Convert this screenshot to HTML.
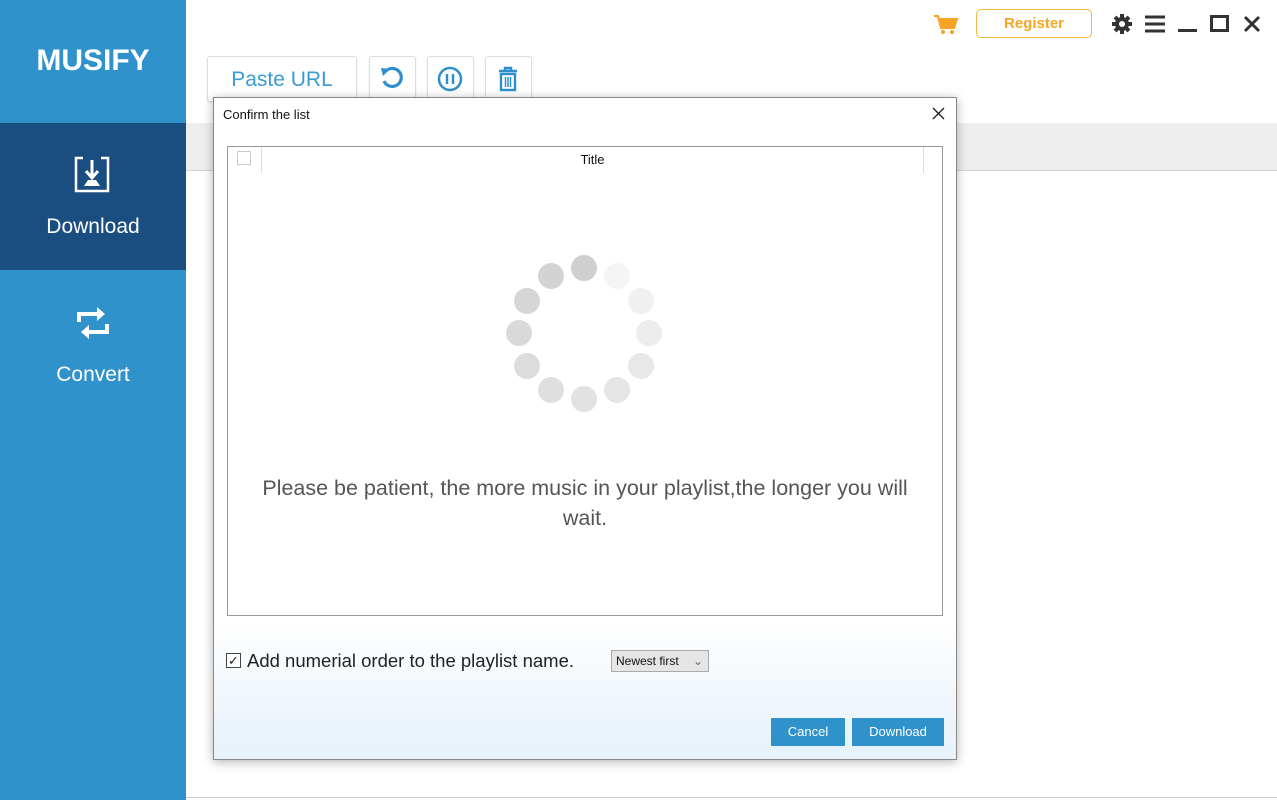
<!DOCTYPE html><html><head><style>
*{margin:0;padding:0;box-sizing:border-box}
body{width:1277px;height:800px;position:relative;overflow:hidden;background:#fff;font-family:"Liberation Sans","DejaVu Sans",sans-serif}
.a{position:absolute}
.side{left:0;top:0;width:186px;height:800px;background:#3092cb}
.btn{border:1px solid #ddd;border-radius:3px;background:#fff;box-shadow:0 1px 2px rgba(0,0,0,.08)}
</style></head><body>
<div class="a side"></div>
<div class="a" style="left:0;top:44px;width:186px;text-align:center;color:#fff;font-size:30px;font-weight:bold">MUSIFY</div>
<div class="a" style="left:0;top:123px;width:186px;height:147px;background:#1b4e80"></div>
<svg class="a" style="left:73px;top:156px" width="38" height="38" viewBox="0 0 38 38"><path d="M10 2H3v33h32V2h-7" fill="none" stroke="#fff" stroke-width="2.5"/><path d="M19 4v17M13 15l6 7 6-7" stroke="#fff" stroke-width="3" fill="none"/><path d="M11 30l4-6h8l4 6z" fill="#fff"/></svg>
<div class="a" style="left:0;top:215px;width:186px;text-align:center;color:#fff;font-size:21px">Download</div>
<svg class="a" style="left:75px;top:304px" width="36" height="38" viewBox="0 0 36 38"><path d="M4 18V10h22" fill="none" stroke="#fff" stroke-width="4"/><path d="M22 3l8 7-8 7z" fill="#fff"/><path d="M32 20v8H10" fill="none" stroke="#fff" stroke-width="4"/><path d="M14 21l-8 7 8 7z" fill="#fff"/></svg>
<div class="a" style="left:0;top:363px;width:186px;text-align:center;color:#fff;font-size:21px">Convert</div>

<div class="a" style="left:186px;top:123px;width:1091px;height:48px;background:#eeeeee;border-bottom:1px solid #d5d5d5"></div>
<div class="a" style="left:186px;top:797px;width:1091px;height:1px;background:#ccc"></div>

<div class="a btn" style="left:207px;top:56px;width:150px;height:46px;color:#3a9bd4;font-size:21px;text-align:center;line-height:46px">Paste URL</div>
<div class="a btn" style="left:369px;top:56px;width:47px;height:46px"></div>
<svg class="a" style="left:379px;top:65px" width="26" height="26" viewBox="0 0 26 26"><path d="M7 6a9 9 0 1 1-2 10" fill="none" stroke="#2f8fcc" stroke-width="3.2"/><path d="M2 3l9 1-7 7z" fill="#2f8fcc"/></svg>
<div class="a btn" style="left:427px;top:56px;width:47px;height:46px"></div>
<svg class="a" style="left:437px;top:66px" width="26" height="26" viewBox="0 0 26 26"><circle cx="13" cy="13" r="11" fill="none" stroke="#2f8fcc" stroke-width="2.5"/><path d="M10 8v10M16 8v10" stroke="#2f8fcc" stroke-width="2.5"/></svg>
<div class="a btn" style="left:485px;top:56px;width:47px;height:46px"></div>
<svg class="a" style="left:497px;top:66px" width="22" height="26" viewBox="0 0 22 26"><path d="M2 5h18M8 5V2h6v3" stroke="#2f8fcc" stroke-width="2.4" fill="none"/><rect x="4" y="8" width="14" height="16" fill="none" stroke="#2f8fcc" stroke-width="2.4"/><path d="M8.5 11v10M11 11v10M13.5 11v10" stroke="#2f8fcc" stroke-width="1.5"/></svg>

<svg class="a" style="left:933px;top:14px" width="26" height="22" viewBox="0 0 26 22"><path d="M1 2h4l3 12h13l3-9H7" fill="#f7a325" stroke="#f7a325" stroke-width="2"/><circle cx="10" cy="18" r="2" fill="#f7a325"/><circle cx="19" cy="18" r="2" fill="#f7a325"/></svg>
<div class="a" style="left:976px;top:9px;width:116px;height:29px;border:1.5px solid #f5b640;border-radius:5px;color:#f5a623;font-size:15px;font-weight:bold;text-align:center;line-height:27px">Register</div>
<svg class="a" style="left:1111px;top:13px" width="22" height="22" viewBox="0 0 22 22"><g stroke="#333" stroke-width="4"><path d="M11 1v20M1 11h20M4 4l14 14M18 4L4 18"/></g><circle cx="11" cy="11" r="7" fill="#333"/><circle cx="11" cy="11" r="3" fill="#fff"/></svg>
<svg class="a" style="left:1145px;top:15px" width="20" height="18"><path d="M0 2h20M0 9h20M0 16h20" stroke="#333" stroke-width="3"/></svg>
<div class="a" style="left:1178px;top:29px;width:19px;height:3px;background:#333"></div>
<div class="a" style="left:1210px;top:15px;width:19px;height:17px;border:3px solid #333"></div>
<svg class="a" style="left:1243px;top:15px" width="18" height="18"><path d="M2 2l14 14M16 2L2 16" stroke="#333" stroke-width="3"/></svg>

<!-- dialog -->
<div class="a" style="left:213px;top:97px;width:744px;height:663px;border:1px solid #888;background:linear-gradient(#fff 0,#fff 520px,#e6f1fa 663px);box-shadow:0 2px 10px rgba(0,0,0,.3)"></div>
<div class="a" style="left:223px;top:107px;font-size:13px;color:#111">Confirm the list</div>
<svg class="a" style="left:932px;top:107px" width="13" height="13"><path d="M1 1l11 11M12 1L1 12" stroke="#222" stroke-width="1.4"/></svg>
<div class="a" style="left:227px;top:146px;width:716px;height:470px;border:1px solid #999;background:#fff"></div>
<div class="a" style="left:237px;top:151px;width:14px;height:14px;border:1px solid #ccc"></div>
<div class="a" style="left:261px;top:147px;width:1px;height:26px;background:#ddd"></div>
<div class="a" style="left:923px;top:147px;width:1px;height:26px;background:#ddd"></div>
<div class="a" style="left:262px;top:152px;width:661px;text-align:center;font-size:13px;color:#111">Title</div>
<svg class="a" style="left:500px;top:250px" width="170" height="170" viewBox="500 250 170 170">
<circle cx="584" cy="268" r="13" fill="#cfcfcf"/><circle cx="551" cy="276" r="13" fill="#d3d3d3"/><circle cx="527" cy="301" r="13" fill="#d6d6d6"/><circle cx="519" cy="333" r="13" fill="#d9d9d9"/><circle cx="527" cy="366" r="13" fill="#dcdcdc"/><circle cx="551" cy="390" r="13" fill="#dfdfdf"/><circle cx="584" cy="399" r="13" fill="#e2e2e2"/><circle cx="617" cy="390" r="13" fill="#e5e5e5"/><circle cx="641" cy="366" r="13" fill="#e8e8e8"/><circle cx="649" cy="333" r="13" fill="#ececec"/><circle cx="641" cy="301" r="13" fill="#f0f0f0"/><circle cx="617" cy="276" r="13" fill="#f5f5f5"/></svg>
<div class="a" style="left:240px;top:473px;width:690px;text-align:center;font-size:21.5px;line-height:30px;color:#555">Please be patient, the more music in your playlist,the longer you will<br>wait.</div>
<div class="a" style="left:226px;top:653px;width:15px;height:15px;border:1px solid #444;background:#fff;font-size:13px;line-height:13px;text-align:center;color:#222">✓</div>
<div class="a" style="left:247px;top:650px;font-size:18.5px;color:#222">Add numerial order to the playlist name.</div>
<div class="a" style="left:611px;top:650px;width:98px;height:22px;border:1px solid #aaa;background:#e5e5e5;font-size:12px;line-height:20px;padding-left:4px;color:#111">Newest first <span style="position:absolute;right:5px;color:#666">⌄</span></div>
<div class="a" style="left:771px;top:718px;width:74px;height:28px;background:#3092cb;color:#fff;font-size:13px;text-align:center;line-height:28px">Cancel</div>
<div class="a" style="left:852px;top:718px;width:92px;height:28px;background:#3092cb;color:#fff;font-size:13px;text-align:center;line-height:28px">Download</div>
</body></html>
